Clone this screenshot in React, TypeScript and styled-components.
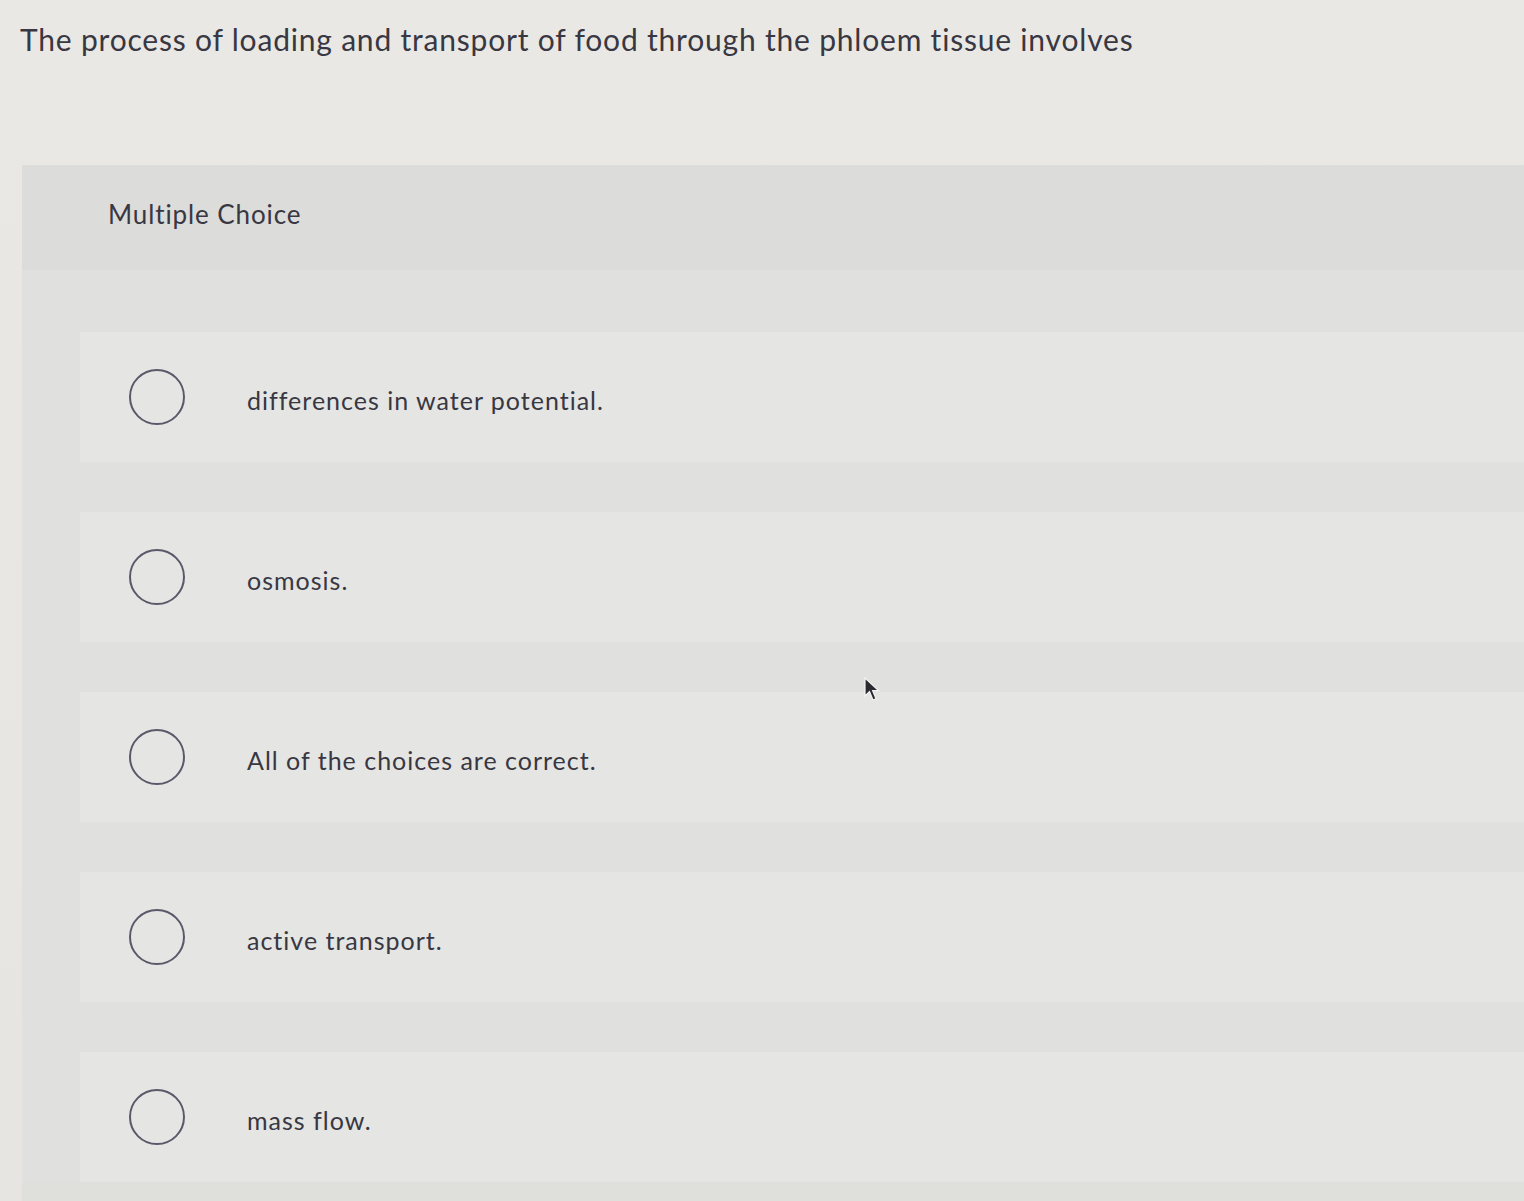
import React from "react";
import styled, { createGlobalStyle } from "styled-components";

const Global = createGlobalStyle`
  html, body { margin: 0; padding: 0; }
  body {
    background: #e8e7e3;
    font-family: Lato, "Open Sans", sans-serif;
    color: #3b3a44;
    overflow: hidden;
  }
`;

const Page = styled.div`
  position: relative;
  width: 1524px;
  height: 1201px;
  overflow: hidden;
  background: linear-gradient(180deg, #e9e8e4 0%, #e6e5e1 100%);
`;

const Question = styled.h1`
  margin: 0;
  padding: 19px 0 0 20px;
  font-size: 30px;
  font-weight: 400;
  line-height: 40px;
  letter-spacing: 0.8px;
  color: #383742;
`;

const Panel = styled.section`
  margin: 106px 0 0 22px;
  background: #dfdfdc;
  height: 1100px;
`;

const PanelHeader = styled.div`
  height: 105px;
  display: flex;
  align-items: center;
  padding-left: 86px;
  font-size: 26px;
  letter-spacing: 0.9px;
  color: #383742;
  background: #dcdcda;
  box-sizing: border-box;
  padding-bottom: 8px;
`;

const OptionList = styled.div`
  display: flex;
  flex-direction: column;
  gap: 50px;
  padding: 62px 0 0 58px;
  background: #e0e0de;
`;

const OptionCard = styled.label`
  height: 130px;
  display: flex;
  align-items: center;
  background: #e5e5e3;
  padding-left: 49px;
  cursor: pointer;
`;

const Radio = styled.span`
  width: 52px;
  height: 52px;
  border: 2px solid #5a596a;
  border-radius: 50%;
  flex: none;
  box-sizing: content-box;
`;

const OptionText = styled.span`
  margin-left: 62px;
  padding-top: 6px;
  font-size: 25px;
  color: #383742;
  letter-spacing: 1px;
`;

const Cursor = styled.svg`
  position: absolute;
  left: 864px;
  top: 677px;
  width: 16px;
  height: 26px;
`;

const options = [
  "differences in water potential.",
  "osmosis.",
  "All of the choices are correct.",
  "active transport.",
  "mass flow.",
];

export default function App() {
  return (
    <Page>
      <Global />
      <Question>
        The process of loading and transport of food through the phloem tissue involves
      </Question>
      <Panel>
        <PanelHeader>Multiple Choice</PanelHeader>
        <OptionList>
          {options.map((o) => (
            <OptionCard key={o}>
              <Radio />
              <OptionText>{o}</OptionText>
            </OptionCard>
          ))}
        </OptionList>
      </Panel>
      <Cursor viewBox="0 0 16 26">
        <path d="M1 1 L1 19 L5.5 14.5 L9 23 L12 21.8 L8.6 13.6 L14.5 13.6 Z" fill="#2a2a30" stroke="#f4f4f2" strokeWidth="1.2" />
      </Cursor>
    </Page>
  );
}
